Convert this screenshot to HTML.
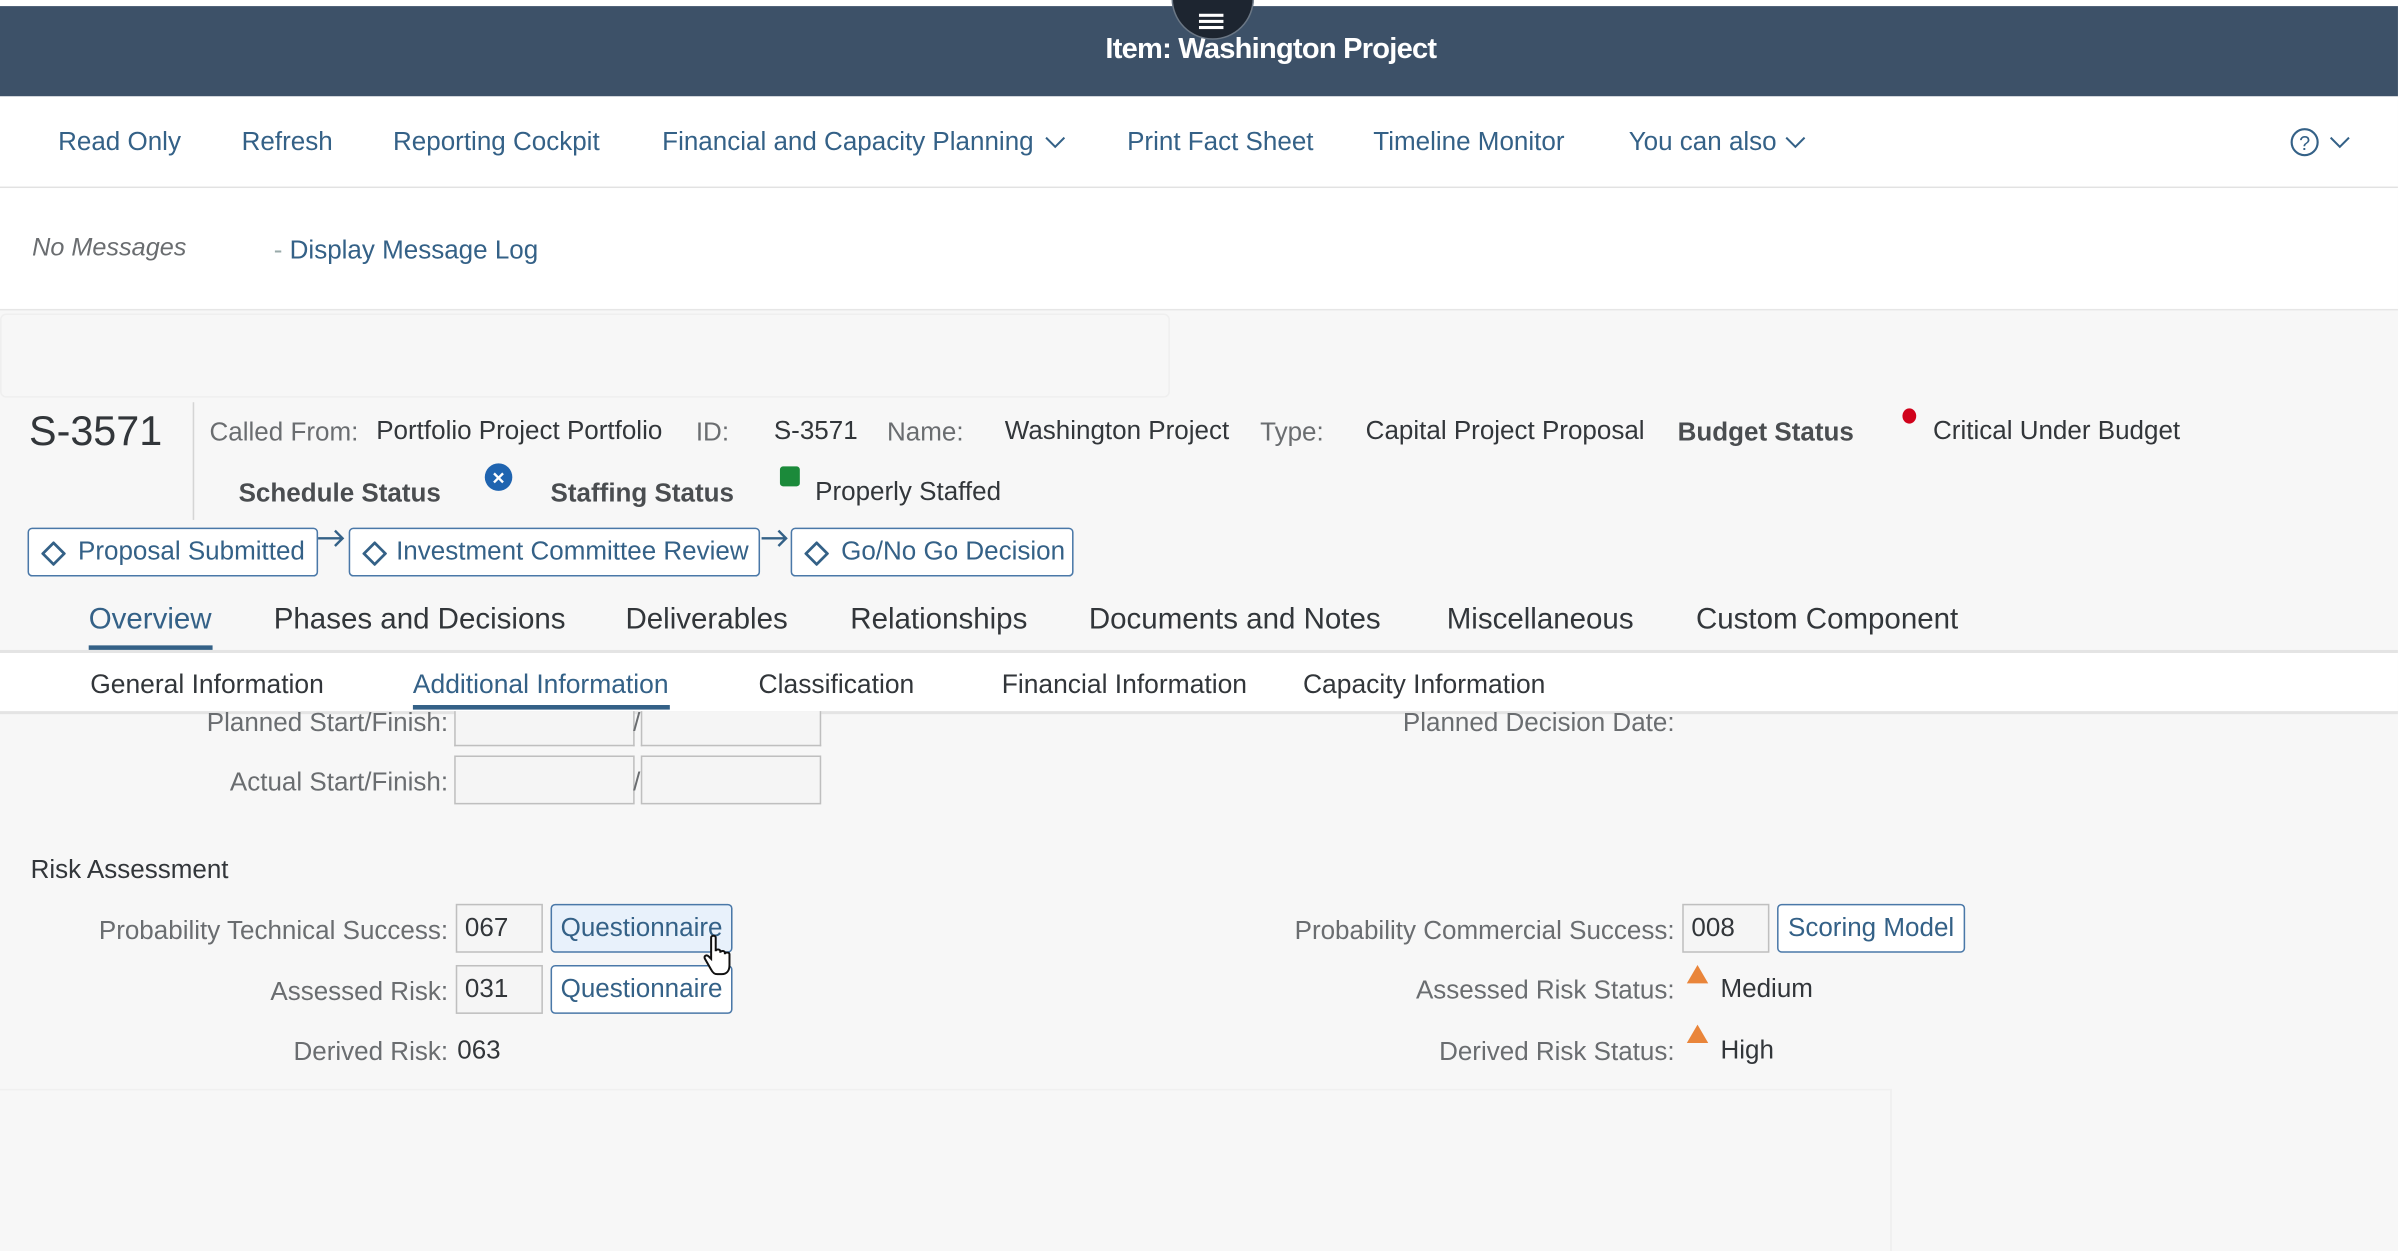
<!DOCTYPE html>
<html><head><meta charset="utf-8">
<style>
html,body{margin:0;padding:0;width:2398px;height:1250px;overflow:hidden;background:#f7f7f7}
#w{position:absolute;left:0;top:0;width:1568px;height:818px;transform:scale(1.5293);transform-origin:0 0;font-family:"Liberation Sans",sans-serif;color:#32363a;background:#f7f7f7}
.a{position:absolute;white-space:nowrap}
.lk{color:#346187;font-size:17px}
.lbl{color:#6a6d70;font-size:17px}
.val{color:#32363a;font-size:17px}
.b{font-weight:bold;color:#4a4d50}
.btn{position:absolute;border:1px solid #4a78a8;border-radius:3px;background:#fff;color:#346187;font-size:17px;height:32px;line-height:30px;box-sizing:border-box;white-space:nowrap}
.inp{position:absolute;border:1px solid #bfbfbf;background:#f5f5f5;box-sizing:border-box;height:32px;font-size:17px;line-height:30px;padding-left:5px}
.dia{position:absolute;left:8px;top:8px}
.tri{position:absolute;width:0;height:0;border-left:7px solid transparent;border-right:7px solid transparent;border-bottom:12px solid #e9853a}
.t{font-size:19.3px}
.s{font-size:17.3px}
</style></head><body><div id="w">
<div style="position:absolute;left:0;top:0;width:1568px;height:4px;background:#fff"></div>
<div style="position:absolute;left:0;top:4px;width:1568px;height:59px;background:#3d5168"></div>
<div class="a" style="left:0;width:1662px;text-align:center;top:22px;color:#fff;font-size:19px;font-weight:bold;letter-spacing:-0.5px">Item: Washington Project</div>
<div style="position:absolute;left:766px;top:-28px;width:52px;height:52px;border-radius:50%;background:#1d2530;border:1px solid #6b7785"></div>
<div style="position:absolute;left:784px;top:9px;width:16px;height:2px;background:#fff;box-shadow:0 4px 0 #fff,0 8px 0 #fff"></div>

<div style="position:absolute;left:0;top:63px;width:1568px;height:59px;background:#fff;border-bottom:1px solid #e2e2e2"></div>
<div class="a lk" style="left:38px;top:83px">Read Only</div>
<div class="a lk" style="left:158px;top:83px">Refresh</div>
<div class="a lk" style="left:257px;top:83px">Reporting Cockpit</div>
<div class="a lk" style="left:433px;top:83px">Financial and Capacity Planning</div>
<svg style="position:absolute;left:683px;top:88px" width="14" height="10"><path d="M1 2 L7 8 L13 2" fill="none" stroke="#346187" stroke-width="1.3"/></svg>
<div class="a lk" style="left:737px;top:83px">Print Fact Sheet</div>
<div class="a lk" style="left:898px;top:83px">Timeline Monitor</div>
<div class="a lk" style="left:1065px;top:83px">You can also</div>
<svg style="position:absolute;left:1167px;top:88px" width="14" height="10"><path d="M1 2 L7 8 L13 2" fill="none" stroke="#346187" stroke-width="1.3"/></svg>
<svg style="position:absolute;left:1497px;top:83px" width="20" height="20"><circle cx="10" cy="10" r="8.5" fill="none" stroke="#346187" stroke-width="1.4"/><text x="10" y="15" font-size="13" fill="#346187" text-anchor="middle" font-family="Liberation Sans">?</text></svg>
<svg style="position:absolute;left:1523px;top:88px" width="14" height="10"><path d="M1 2 L7 8 L13 2" fill="none" stroke="#346187" stroke-width="1.3"/></svg>

<div style="position:absolute;left:0;top:123px;width:1568px;height:79px;background:#fff;border-bottom:1px solid #e6e6e6"></div>
<div class="a" style="left:21px;top:153px;font-style:italic;color:#6a6d70;font-size:16.5px">No Messages</div>
<div class="a lk" style="left:179px;top:154px"><span style="color:#9aa">-</span> Display Message Log</div>

<div style="position:absolute;left:0;top:205px;width:763px;height:53px;border:1px solid #efefef;border-radius:4px"></div>
<div class="a" style="left:19px;top:267px;font-size:27px;color:#32363a">S-3571</div>
<div style="position:absolute;left:126px;top:263px;width:1px;height:77px;background:#d5d5d5"></div>
<div class="a lbl" style="left:137px;top:273px">Called From:</div>
<div class="a val" style="left:246px;top:272px">Portfolio Project Portfolio</div>
<div class="a lbl" style="left:455px;top:273px">ID:</div>
<div class="a val" style="left:506px;top:272px">S-3571</div>
<div class="a lbl" style="left:580px;top:273px">Name:</div>
<div class="a val" style="left:657px;top:272px">Washington Project</div>
<div class="a lbl" style="left:824px;top:273px">Type:</div>
<div class="a val" style="left:893px;top:272px">Capital Project Proposal</div>
<div class="a val b" style="left:1097px;top:273px">Budget Status</div>
<div style="position:absolute;left:1244px;top:267px;width:9px;height:10px;border-radius:50%;background:#d0021b"></div>
<div class="a val" style="left:1264px;top:272px">Critical Under Budget</div>
<div class="a val b" style="left:156px;top:313px">Schedule Status</div>
<div style="position:absolute;left:317px;top:303px;width:18px;height:18px;border-radius:50%;background:#1f64b0;color:#fff;font-size:14px;line-height:18px;text-align:center;font-weight:bold">&#215;</div>
<div class="a val b" style="left:360px;top:313px">Staffing Status</div>
<div style="position:absolute;left:510px;top:305px;width:13px;height:13px;border-radius:2px;background:#1b8a3a"></div>
<div class="a val" style="left:533px;top:312px">Properly Staffed</div>

<svg style="position:absolute;left:0;top:340px" width="720" height="40"><path d="M208 12 H224 M219 7 L224 12 L219 17 M498 12 H514 M509 7 L514 12 L509 17" fill="none" stroke="#346187" stroke-width="1.6"/></svg>
<div class="btn" style="left:18px;top:345px;width:190px;padding-left:32px"><svg class="dia" width="16" height="16"><path d="M8 1 L15 8 L8 15 L1 8 Z" fill="none" stroke="#346187" stroke-width="1.8"/></svg>Proposal Submitted</div>
<div class="btn" style="left:228px;top:345px;width:269px;padding-left:30px"><svg class="dia" width="16" height="16"><path d="M8 1 L15 8 L8 15 L1 8 Z" fill="none" stroke="#346187" stroke-width="1.8"/></svg>Investment Committee Review</div>
<div class="btn" style="left:517px;top:345px;width:185px;padding-left:32px"><svg class="dia" width="16" height="16"><path d="M8 1 L15 8 L8 15 L1 8 Z" fill="none" stroke="#346187" stroke-width="1.8"/></svg>Go/No Go Decision</div>

<div class="a t" style="left:58px;top:395px;color:#346187">Overview</div>
<div class="a t" style="left:179px;top:395px">Phases and Decisions</div>
<div class="a t" style="left:409px;top:395px">Deliverables</div>
<div class="a t" style="left:556px;top:395px">Relationships</div>
<div class="a t" style="left:712px;top:395px">Documents and Notes</div>
<div class="a t" style="left:946px;top:395px">Miscellaneous</div>
<div class="a t" style="left:1109px;top:395px">Custom Component</div>
<div style="position:absolute;left:58px;top:422px;width:81px;height:3px;background:#346187"></div>
<div style="position:absolute;left:0;top:425px;width:1568px;height:38px;background:#fff;border-top:2px solid #e4e4e4;border-bottom:2px solid #e4e4e4"></div>
<div class="a val s" style="left:59px;top:437px">General Information</div>
<div class="a lk s" style="left:270px;top:437px">Additional Information</div>
<div class="a val s" style="left:496px;top:437px">Classification</div>
<div class="a val s" style="left:655px;top:437px">Financial Information</div>
<div class="a val s" style="left:852px;top:437px">Capacity Information</div>
<div style="position:absolute;left:270px;top:461px;width:168px;height:3px;background:#346187"></div>

<div class="a lbl" style="left:0;width:293px;text-align:right;top:463px">Planned Start/Finish:</div>
<div class="inp" style="left:297px;top:465px;width:118px;height:23px;border-top:none"></div>
<div class="a lbl" style="left:414px;top:463px">/</div>
<div class="inp" style="left:419px;top:465px;width:118px;height:23px;border-top:none"></div>
<div class="a lbl" style="left:0;width:1095px;text-align:right;top:463px">Planned Decision Date:</div>
<div class="a lbl" style="left:0;width:293px;text-align:right;top:502px">Actual Start/Finish:</div>
<div class="inp" style="left:297px;top:494px;width:118px;height:32px"></div>
<div class="a lbl" style="left:414px;top:502px">/</div>
<div class="inp" style="left:419px;top:494px;width:118px;height:32px"></div>

<div class="a val" style="left:20px;top:559px">Risk Assessment</div>
<div class="a lbl" style="left:0;width:293px;text-align:right;top:599px">Probability Technical Success:</div>
<div class="inp" style="left:298px;top:591px;width:57px">067</div>
<div class="btn" style="left:360px;top:591px;width:119px;text-align:center;background:#e8f1fb">Questionnaire</div>
<div class="a lbl" style="left:0;width:293px;text-align:right;top:639px">Assessed Risk:</div>
<div class="inp" style="left:298px;top:631px;width:57px">031</div>
<div class="btn" style="left:360px;top:631px;width:119px;text-align:center">Questionnaire</div>
<div class="a lbl" style="left:0;width:293px;text-align:right;top:678px">Derived Risk:</div>
<div class="a val" style="left:299px;top:677px">063</div>
<svg style="position:absolute;left:458px;top:611px" width="22" height="28"><path d="M7 2 C7 0.5 10 0.5 10 2 V11 C10 9.5 13 9.5 13 11 V12 C13 10.5 16 10.5 16 12 V13 C16 11.5 19 11.5 19 13 V20 C19 24 17 26 14 26 H11 C9 26 8 25 7 23 L3 16 C2 14 4 13 5.5 14.5 L7 16 Z" fill="#fff" stroke="#111" stroke-width="1.3"/></svg>

<div class="a lbl" style="left:0;width:1095px;text-align:right;top:599px">Probability Commercial Success:</div>
<div class="inp" style="left:1100px;top:591px;width:57px">008</div>
<div class="btn" style="left:1162px;top:591px;width:123px;text-align:center">Scoring Model</div>
<div class="a lbl" style="left:0;width:1095px;text-align:right;top:638px">Assessed Risk Status:</div>
<div class="tri" style="left:1103px;top:631px"></div>
<div class="a val" style="left:1125px;top:637px">Medium</div>
<div class="a lbl" style="left:0;width:1095px;text-align:right;top:678px">Derived Risk Status:</div>
<div class="tri" style="left:1103px;top:670px"></div>
<div class="a val" style="left:1125px;top:677px">High</div>
<div style="position:absolute;left:0;top:712px;width:1236px;height:105px;border-top:1px solid #f0f0f0;border-right:1px solid #eee"></div>
</div></body></html>
